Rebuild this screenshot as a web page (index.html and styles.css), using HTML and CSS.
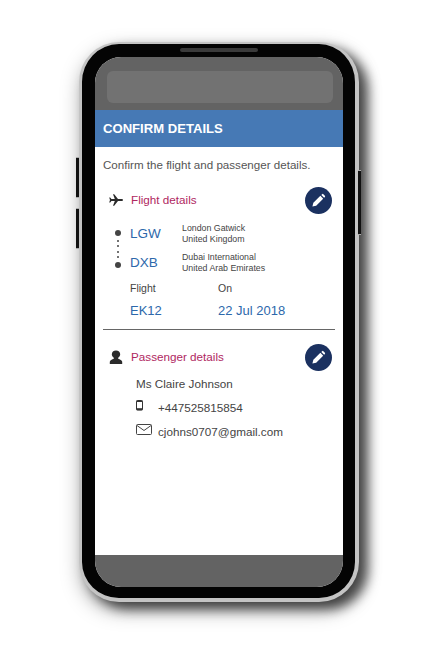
FILE: index.html
```html
<!DOCTYPE html>
<html>
<head>
    <title>Confirm details</title>
    <link rel="stylesheet" href="styles.css">
</head>
<body>
    <div class="phone">
        <div class="speaker"></div>
        <div class="btn btn-left-1"></div>
        <div class="btn btn-left-2"></div>
        <div class="btn btn-right"></div>
        <div class="screen">
            <div class="top-bar"><div class="address-bar"></div></div>
            <div class="header">CONFIRM DETAILS</div>
            <div class="content">
                <p class="intro">Confirm the flight and passenger details.</p>

                <div class="section-head flight-head">
                    <svg class="section-icon" width="16" height="16" viewBox="0 0 16 16"><path fill="#2b2b2b" d="M15 8c0-.6-.7-1-1.500-1H10L6.200 2.200H5L6.800 7H3.400L2.200 5.600H1.200L2 8l-.8 2.400h1L3.400 9h3.400L5 13.800h1.200L10 9h3.500c.8 0 1.500-.4 1.500-1z"/></svg>
                    <span class="section-title">Flight details</span>
                    <a class="edit-btn"><svg width="15" height="15" viewBox="0 0 16 16"><path fill="#fff" d="M1.500 14.500l1-4L10 3l3 3-7.500 7.500zM11 2l.8-.8a1 1 0 0 1 1.400 0l1.600 1.600a1 1 0 0 1 0 1.400L14 5z"/></svg></a>
                </div>

                <div class="route">
                    <div class="route-line">
                        <span class="dot"></span>
                        <span class="tiny"></span>
                        <span class="tiny"></span>
                        <span class="tiny"></span>
                        <span class="tiny"></span>
                        <span class="dot"></span>
                    </div>
                    <div class="stops">
                        <div class="stop">
                            <span class="code">LGW</span>
                            <span class="place">London Gatwick<br>United Kingdom</span>
                        </div>
                        <div class="stop">
                            <span class="code">DXB</span>
                            <span class="place">Dubai International<br>United Arab Emirates</span>
                        </div>
                    </div>
                </div>

                <div class="flight-info">
                    <div class="info-col">
                        <div class="info-label">Flight</div>
                        <div class="info-value">EK12</div>
                    </div>
                    <div class="info-col">
                        <div class="info-label">On</div>
                        <div class="info-value">22 Jul 2018</div>
                    </div>
                </div>

                <hr class="divider">

                <div class="section-head passenger-head">
                    <svg class="section-icon" width="16" height="16" viewBox="0 0 16 16"><path fill="#2b2b2b" d="M8 1.500c-2.500 0-4.200 1.500-4.200 3.800 0 1.500.8 2.700 2 3.400v1.100C4 10.500 2 11.300 1.800 12.800V15h12.400v-2.200c-.2-1.500-2.200-2.300-4-3V8.700c1.200-.7 2-1.900 2-3.400 0-2.300-1.700-3.800-4.200-3.800z"/></svg>
                    <span class="section-title">Passenger details</span>
                    <a class="edit-btn"><svg width="15" height="15" viewBox="0 0 16 16"><path fill="#fff" d="M1.500 14.500l1-4L10 3l3 3-7.500 7.500zM11 2l.8-.8a1 1 0 0 1 1.400 0l1.600 1.600a1 1 0 0 1 0 1.400L14 5z"/></svg></a>
                </div>

                <div class="passenger">
                    <div class="passenger-name">Ms Claire Johnson</div>
                    <div class="contact">
                        <svg class="contact-icon" width="16" height="12" viewBox="0 0 16 12"><rect x="0.500" y="0.500" width="6" height="9.500" rx="1" fill="none" stroke="#333"/><rect x="0.500" y="0.500" width="6" height="1.500" fill="#333"/><rect x="0.500" y="8.200" width="6" height="2" fill="#333"/></svg>
                        <span>+447525815854</span>
                    </div>
                    <div class="contact">
                        <svg class="contact-icon" width="16" height="12" viewBox="0 0 16 12"><rect x="0.500" y="0.500" width="15" height="10" rx="1" fill="none" stroke="#444"/><path d="M1 1.500l7 5 7-5" fill="none" stroke="#444"/></svg>
                        <span>cjohns0707@gmail.com</span>
                    </div>
                </div>
            </div>
            <div class="bottom-bar"></div>
        </div>
    </div>
</body>
</html>
```

FILE: styles.css
```css
body {
    box-sizing: border-box;
    height: 651px;
    margin: 0;
    padding: 42px 0 0 79px;
    background: #fff;
    font-family: "Liberation Sans", Arial, sans-serif;
    color: #444;
}
.phone {
    position: relative;
    box-sizing: border-box;
    width: 280px;
    height: 560px;
    padding: 13px 12px 11px 13px;
    background: #040404;
    border-style: solid;
    border-color: #c4c4c4;
    border-width: 2px 4px 4px 3px;
    border-radius: 40px;
    box-shadow: 9px 7px 12px rgba(0,0,0,0.65), 2px 8px 20px rgba(0,0,0,0.35);
}
.speaker {
    position: absolute;
    top: 4px;
    left: 98px;
    width: 78px;
    height: 4px;
    background: #3a3a3a;
    border-radius: 2px;
}
.btn {
    position: absolute;
    width: 3px;
    background: #111;
    border: 1px solid #aaa;
    border-width: 1px 0;
}
.btn-left-1 { left: -6px; top: 113px; height: 39px; }
.btn-left-2 { left: -6px; top: 164px; height: 39px; }
.btn-right { right: -6px; top: 126px; height: 63px; }
.screen {
    display: flex;
    flex-direction: column;
    height: 100%;
    overflow: hidden;
    background: #fff;
    border-radius: 26px;
}
.top-bar {
    box-sizing: border-box;
    height: 53px;
    padding: 14px 10px 7px 12px;
    background: #636363;
}
.address-bar {
    height: 100%;
    background: #727272;
    border-radius: 6px;
}
.header {
    height: 37px;
    line-height: 38px;
    padding-left: 8px;
    background: #4679b5;
    color: #fff;
    font-size: 13.100px;
    font-weight: bold;
}
.content {
    flex: 1;
    padding: 0 8px;
}
.intro {
    margin: 11px 0 0;
    font-size: 11.600px;
    line-height: 14px;
    color: #555;
}
.section-head {
    display: flex;
    align-items: center;
    height: 26px;
    padding-left: 5px;
}
.flight-head { margin-top: 15px; }
.passenger-head { margin-top: 14px; }
.section-icon {
    margin-right: 7px;
}
.section-title {
    flex: 1;
    margin-bottom: 2px;
    font-size: 11.700px;
    color: #b0275f;
}
.edit-btn {
    display: flex;
    align-items: center;
    justify-content: center;
    width: 27px;
    height: 27px;
    margin-right: 3px;
    background: #1b3160;
    border-radius: 50%;
}
.route {
    display: flex;
    margin-top: 6px;
}
.route-line {
    display: flex;
    flex-direction: column;
    align-items: center;
    gap: 3.600px;
    width: 6px;
    margin: 11px 0 0 12px;
}
.dot {
    width: 6px;
    height: 6px;
    background: #444;
    border-radius: 50%;
}
.tiny {
    width: 2px;
    height: 2px;
    background: #444;
    border-radius: 50%;
}
.stops {
    margin-left: 9px;
}
.stop {
    display: flex;
    align-items: center;
    height: 29px;
}
.code {
    width: 52px;
    font-size: 13.500px;
    color: #2d68ab;
}
.place {
    font-size: 8.800px;
    line-height: 11px;
    color: #444;
}
.flight-info {
    display: flex;
    margin: 4px 0 0 27px;
}
.info-col { width: 88px; }
.info-label {
    font-size: 10.500px;
    line-height: 14px;
}
.info-value {
    margin-top: 8px;
    font-size: 13px;
    line-height: 15px;
    color: #2d68ab;
}
.divider {
    height: 1px;
    margin: 11px 0 0;
    border: 0;
    background: #666;
}
.passenger {
    margin: 6px 0 0 33px;
    font-size: 11.700px;
    color: #444;
}
.passenger-name {
    margin-bottom: 3px;
    line-height: 16px;
}
.contact {
    display: flex;
    align-items: center;
    height: 24px;
}
.contact-icon {
    margin: 0 6px 3px 0;
}
.bottom-bar {
    height: 32px;
    background: #636363;
}
```
